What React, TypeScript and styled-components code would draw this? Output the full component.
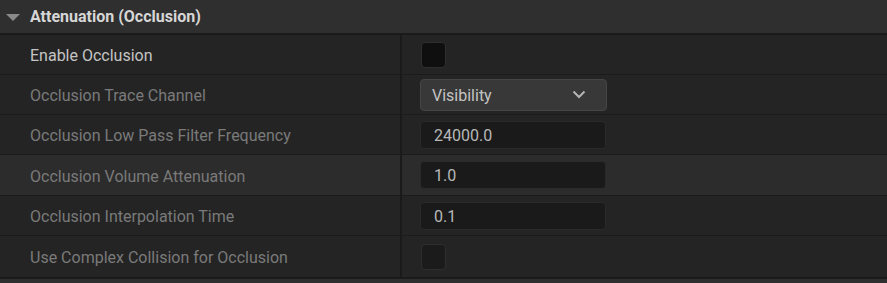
import React from "react";
import styled, { createGlobalStyle } from "styled-components";

const GlobalStyle = createGlobalStyle`
  html, body {
    margin: 0;
    padding: 0;
    background: #2f2f2f;
  }
  body {
    font-family: Roboto, "Noto Sans", sans-serif;
  }
`;

const PanelEl = styled.div`
  width: 887px;
  height: 283px;
  background-color: #2f2f2f;
  display: flex;
  flex-direction: column;
  overflow: hidden;
`;

const HeaderEl = styled.div`
  height: 33px;
  flex-shrink: 0;
  display: flex;
  align-items: center;
  gap: 9px;
  padding-left: 5px;
  background-color: #2f2f2f;
  border-bottom: 2px solid #1a1a1a;
  color: #d6d6d6;
  font-size: 16px;
  font-weight: 700;
`;

const RowEl = styled.div<{ $hover?: boolean; $tall?: boolean }>`
  height: ${(p) => (p.$tall ? "41px" : "40px")};
  flex-shrink: 0;
  box-sizing: border-box;
  display: flex;
  background-color: ${(p) => (p.$hover ? "#2c2c2c" : "#242424")};
  border-bottom: 1px solid #1b1b1b;
  &:last-child {
    height: 43px;
    border-bottom: 2px solid #1a1a1a;
  }
`;

const LabelEl = styled.div<{ $active?: boolean }>`
  width: 402px;
  box-sizing: border-box;
  padding: 2px 0 0 30px;
  display: flex;
  align-items: center;
  font-size: 16px;
  color: ${(p) => (p.$active ? "#c4c4c4" : "#7a7a7a")};
  border-right: 2px solid #1a1a1a;
`;

const ValueEl = styled.div`
  flex: 1;
  display: flex;
  align-items: center;
  padding-left: 18px;
`;

const CheckboxEl = styled.div<{ $dim?: boolean }>`
  width: 23px;
  height: 24px;
  margin-left: 1px;
  border-radius: 4px;
  background-color: ${(p) => (p.$dim ? "#1b1b1b" : "#0f0f0f")};
  border: 1px solid #2e2e2e;
`;

const DropdownEl = styled.div`
  width: 185px;
  height: 30px;
  border: 1px solid #454545;
  border-radius: 4px;
  background-color: #383838;
  display: flex;
  align-items: center;
  justify-content: space-between;
  color: #c4c4c4;
  font-size: 16px;
`;

const DropTextEl = styled.span`
  padding: 1px 0 0 11px;
`;

const ChevronEl = styled.svg`
  margin-right: 20px;
`;

const InputEl = styled.div`
  width: 186px;
  height: 28px;
  border: 1px solid #2a2a2a;
  border-radius: 4px;
  background-color: #1a1a1a;
  display: flex;
  align-items: center;
  padding: 1px 0 0 13px;
  box-sizing: border-box;
  color: #b8b8b8;
  font-size: 16px;
`;

function Triangle() {
  return (
    <svg width="16" height="10" viewBox="0 0 16 10">
      <path d="M1 2 L15 2 L8 9 Z" fill="#8a8a8a" />
    </svg>
  );
}

export default function App() {
  return (
    <PanelEl>
      <GlobalStyle />
      <HeaderEl>
        <Triangle />
        <span>Attenuation (Occlusion)</span>
      </HeaderEl>
      <RowEl>
        <LabelEl $active>Enable Occlusion</LabelEl>
        <ValueEl>
          <CheckboxEl />
        </ValueEl>
      </RowEl>
      <RowEl>
        <LabelEl>Occlusion Trace Channel</LabelEl>
        <ValueEl>
          <DropdownEl>
            <DropTextEl>Visibility</DropTextEl>
            <ChevronEl width="14" height="9" viewBox="0 0 14 9">
              <path d="M1.5 1.5 L7 7 L12.5 1.5" fill="none" stroke="#b4b4b4" strokeWidth="2" />
            </ChevronEl>
          </DropdownEl>
        </ValueEl>
      </RowEl>
      <RowEl>
        <LabelEl>Occlusion Low Pass Filter Frequency</LabelEl>
        <ValueEl>
          <InputEl>24000.0</InputEl>
        </ValueEl>
      </RowEl>
      <RowEl $hover $tall>
        <LabelEl>Occlusion Volume Attenuation</LabelEl>
        <ValueEl>
          <InputEl>1.0</InputEl>
        </ValueEl>
      </RowEl>
      <RowEl>
        <LabelEl>Occlusion Interpolation Time</LabelEl>
        <ValueEl>
          <InputEl>0.1</InputEl>
        </ValueEl>
      </RowEl>
      <RowEl>
        <LabelEl>Use Complex Collision for Occlusion</LabelEl>
        <ValueEl>
          <CheckboxEl $dim />
        </ValueEl>
      </RowEl>
    </PanelEl>
  );
}
